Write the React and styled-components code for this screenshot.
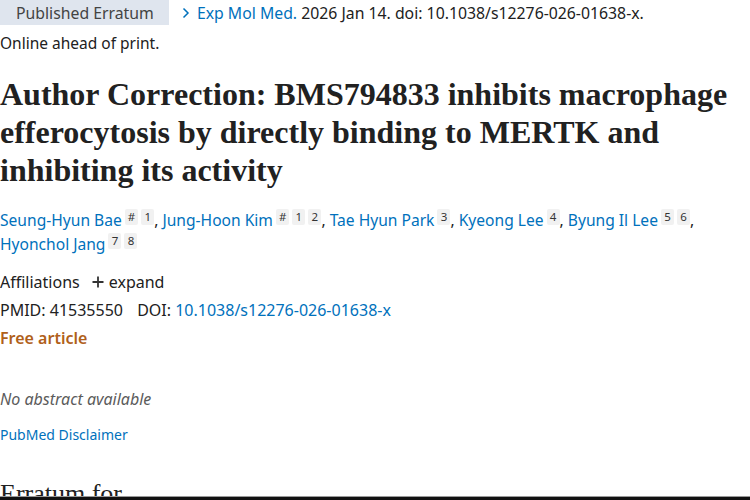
import styled, { createGlobalStyle } from "styled-components";

const Global = createGlobalStyle`
  body {
    margin: 0;
    background: #fff;
    font-family: "Noto Sans", "Open Sans", sans-serif;
    color: #212121;
  }
`;

const Page = styled.div`
  width: 750px;
  height: 500px;
  overflow: hidden;
  position: relative;
`;

const Header = styled.div`
  display: flex;
  align-items: center;
  height: 25px;
  font-size: 15.8px;
`;

const TypeBadge = styled.span`
  display: inline-flex;
  align-items: center;
  height: 25px;
  padding: 0 15px 0 16px;
  background: #dfe5ee;
  color: #434343;
`;

const Citation = styled.span`
  margin-left: 12px;
  display: inline-flex;
  align-items: center;
  gap: 6px;
`;

const Link = styled.a`
  color: #0071bc;
  text-decoration: none;
`;

const Note = styled.div`
  font-size: 15.5px;
  margin-top: 7px;
`;

const Title = styled.h1`
  margin: 21px 0 0;
  font-family: "Liberation Serif", serif;
  font-weight: bold;
  font-size: 32px;
  line-height: 38px;
  color: #212121;
`;

const Authors = styled.div`
  margin-top: 19px;
  font-size: 15.6px;
  line-height: 24px;
  color: #212121;
`;

const Sup = styled.span`
  display: inline-block;
  vertical-align: 5px;
  margin-left: 3px;
  padding: 0 3px;
  min-width: 7px;
  text-align: center;
  font-size: 11.5px;
  line-height: 16px;
  background: #f1f1f1;
  border-radius: 2px;
  color: #333;
`;

const Row = styled.div`
  font-size: 16px;
  line-height: 28px;
  margin-top: ${(p) => p.$top || 0}px;
  color: ${(p) => p.$color || "#212121"};
  font-weight: ${(p) => (p.$bold ? 600 : 400)};
  font-style: ${(p) => (p.$italic ? "italic" : "normal")};
`;

const Expand = styled.span`
  display: inline-flex;
  align-items: center;
  gap: 5px;
  margin-left: 12px;
  vertical-align: top;
`;

const Spacer = styled.span`
  display: inline-block;
  width: ${(p) => p.$w}px;
`;

const Disclaimer = styled.div`
  margin-top: 12px;
  font-size: 14px;
`;

const Section = styled.h2`
  margin: 35px 0 0;
  font-family: "Liberation Serif", serif;
  font-weight: normal;
  font-size: 26px;
  line-height: 30px;
`;

const BottomBar = styled.div`
  position: absolute;
  left: 0;
  right: 0;
  bottom: 0;
  height: 3px;
  background: #111;
  border-top: 1px solid #999;
`;

const Chevron = () => (
  <svg width="10" height="12" viewBox="0 0 10 12">
    <path d="M2.5 1.5 L7 6 L2.5 10.5" fill="none" stroke="#0071bc" strokeWidth="1.5" />
  </svg>
);

const Plus = () => (
  <svg width="12" height="12" viewBox="0 0 12 12">
    <path d="M6 0.5 V11.5 M0.5 6 H11.5" stroke="#333" strokeWidth="1.8" />
  </svg>
);

const authors = [
  { name: "Seung-Hyun Bae", sups: ["#", "1"] },
  { name: "Jung-Hoon Kim", sups: ["#", "1", "2"] },
  { name: "Tae Hyun Park", sups: ["3"] },
  { name: "Kyeong Lee", sups: ["4"] },
  { name: "Byung Il Lee", sups: ["5", "6"] },
  { name: "Hyonchol Jang", sups: ["7", "8"] },
];

export default function App() {
  return (
    <Page>
      <Global />
      <Header>
        <TypeBadge>Published Erratum</TypeBadge>
        <Citation>
          <Chevron />
          <span>
            <Link>Exp Mol Med.</Link> 2026 Jan 14. doi: 10.1038/s12276-026-01638-x.
          </span>
        </Citation>
      </Header>
      <Note>Online ahead of print.</Note>
      <Title>
        Author Correction: BMS794833 inhibits macrophage efferocytosis by directly binding to MERTK and
        inhibiting its activity
      </Title>
      <Authors>
        {authors.map((a, i) => (
          <span key={a.name}>
            <Link>{a.name}</Link>
            {a.sups.map((s, j) => (
              <Sup key={j}>{s}</Sup>
            ))}
            {i < authors.length - 1 ? ", " : ""}
          </span>
        ))}
      </Authors>
      <Row $top={12}>
        Affiliations
        <Expand>
          <Plus />
          expand
        </Expand>
      </Row>
      <Row>
        PMID: 41535550 <Spacer $w={10} />DOI: <Link>10.1038/s12276-026-01638-x</Link>
      </Row>
      <Row $color="#b0601a" $bold>
        Free article
      </Row>
      <Row $top={33} $italic $color="#5b5b5b">
        No abstract available
      </Row>
      <Disclaimer>
        <Link>PubMed Disclaimer</Link>
      </Disclaimer>
      <Section>Erratum for</Section>
      <BottomBar />
    </Page>
  );
}
